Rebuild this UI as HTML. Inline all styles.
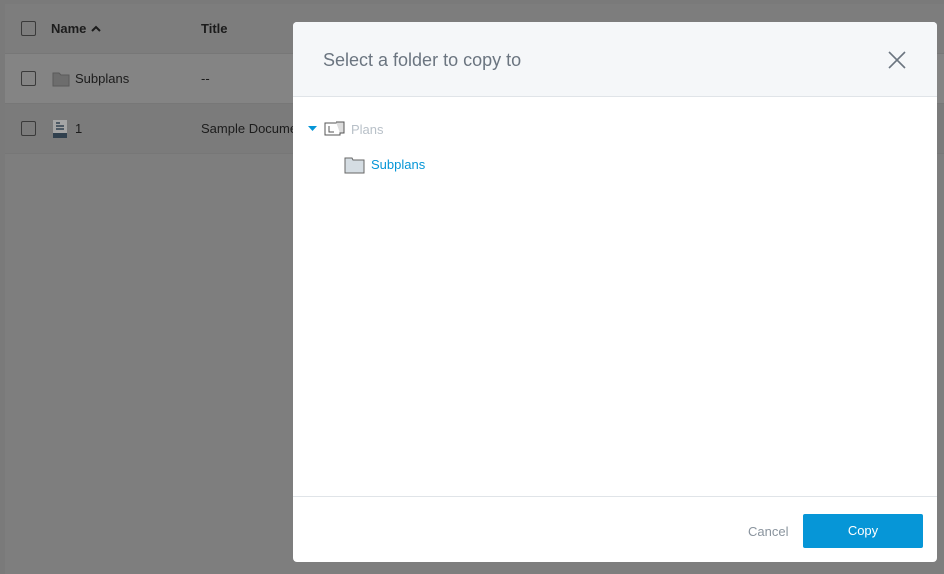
<!DOCTYPE html>
<html><head><style>
*{margin:0;padding:0;box-sizing:border-box}
body{width:944px;height:574px;overflow:hidden;background:#7a7a7a;font-family:"Liberation Sans",sans-serif;position:relative}
.tbl{position:absolute;left:5px;top:4px;width:939px;height:570px;background:#7e7e7e}
.row{position:absolute;left:0;width:939px;height:50px;border-bottom:1px solid #777}
.cb{position:absolute;left:16px;width:15px;height:15px;border:1px solid #3a3a3a;border-radius:2px}
.t{position:absolute;font-size:13px;color:#1c1c1c}
.modal{position:absolute;left:293px;top:22px;width:644px;height:540px;background:#fff;border-radius:4px;overflow:hidden}
.mh{height:75px;background:#f5f7f9;border-bottom:1px solid #e0e4e8;position:relative}
.mh h1{position:absolute;left:30px;top:28px;font-size:18px;font-weight:normal;color:#6b7580}
.foot{position:absolute;left:0;top:474px;width:644px;height:66px;border-top:1px solid #e0e4e8}
.btn{position:absolute;left:510px;top:17px;width:120px;height:34px;background:#0696d7;color:#fff;font-size:13px;text-align:center;line-height:34px;border-radius:2px}
</style></head><body>
<div class="tbl">
 <div class="row" style="top:0;background:#7d7d7d"><div class="cb" style="top:17px"></div><div class="t" style="left:46px;top:17px;font-weight:bold">Name</div>
  <svg style="position:absolute;left:86px;top:21px" width="10" height="7"><path d="M1 6L5 2L9 6" stroke="#1c1c1c" stroke-width="2" fill="none"/></svg>
  <div class="t" style="left:196px;top:17px;font-weight:bold">Title</div></div>
 <div class="row" style="top:50px;background:#848484"><div class="cb" style="top:17px"></div>
  <svg style="position:absolute;left:47px;top:17px" width="18" height="16"><path d="M1 2h6l2 2h8v11H1z" fill="#6d6d6d" stroke="#5a5a5a"/></svg>
  <div class="t" style="left:70px;top:17px">Subplans</div><div class="t" style="left:196px;top:17px">--</div></div>
 <div class="row" style="top:100px;background:#7b7b7b"><div class="cb" style="top:17px"></div>
  <svg style="position:absolute;left:47px;top:15px" width="16" height="20"><rect x="1" y="1" width="14" height="18" fill="#d0d0d0" opacity=".5"/><rect x="1" y="14" width="14" height="5" fill="#30404e"/><path d="M4 4h4M4 7h8M4 10h8" stroke="#30404e" stroke-width="1.5"/></svg>
  <div class="t" style="left:70px;top:17px">1</div><div class="t" style="left:196px;top:17px">Sample Document</div></div>
</div>
<div class="modal">
 <div class="mh"><h1>Select a folder to copy to</h1>
  <svg style="position:absolute;left:595px;top:29px" width="18" height="18"><path d="M1 1L17 17M17 1L1 17" stroke="#6b7580" stroke-width="1.6"/></svg></div>
 <svg style="position:absolute;left:15px;top:104px" width="10" height="6"><path d="M0 0h9L4.5 5z" fill="#0696d7"/></svg>
 <svg style="position:absolute;left:31px;top:99px" width="22" height="16"><rect x="1" y="2" width="15" height="12" fill="#fff" stroke="#555"/><path d="M12 1h8v11h-4" fill="#ddd" stroke="#555"/><path d="M5 5v6h5" stroke="#555" fill="none"/></svg>
 <div style="position:absolute;left:58px;top:100px;font-size:13px;color:#b8c0c8">Plans</div>
 <svg style="position:absolute;left:51px;top:135px" width="22" height="17"><path d="M1 1h7l1 2h11v13H1z" fill="#d5dde3" stroke="#666"/></svg>
 <div style="position:absolute;left:78px;top:135px;font-size:13px;color:#0696d7">Subplans</div>
 <div class="foot"><div style="position:absolute;left:455px;top:27px;font-size:13px;color:#8a949e">Cancel</div><div class="btn">Copy</div></div>
</div>
</body></html>
